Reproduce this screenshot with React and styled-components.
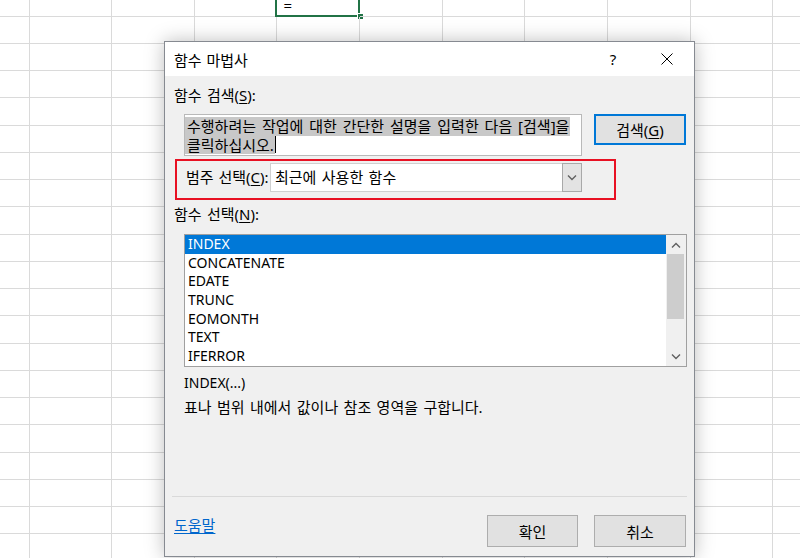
import React from "react";
import styled, { createGlobalStyle } from "styled-components";

const GlobalStyle = createGlobalStyle`
  html, body {
    margin: 0;
    padding: 0;
    background: #fff;
  }
  body {
    font-family: "Noto Sans", "Noto Sans CJK KR", sans-serif;
    font-size: 15px;
    color: #000;
    overflow: hidden;
  }
`;

const COLS = 11;
const ROWS = 21;

const Page = styled.div`
  position: relative;
  width: 800px;
  height: 558px;
  overflow: hidden;
  background: #fff;
`;

const Sheet = styled.div`
  display: grid;
  grid-template-columns: 29.5px repeat(${COLS - 1}, 82.65px);
  grid-template-rows: 16.5px repeat(${ROWS - 1}, 27.26px);
`;

const Cell = styled.div`
  box-sizing: border-box;
  border-right: 1px solid #dadada;
  border-bottom: 1px solid #dadada;
  position: relative;
  font-size: 15px;
  display: flex;
  align-items: flex-start;
  padding: 0 0 0 6px;
  line-height: 11px;

  ${(p) =>
    p.$active &&
    `
    &::before {
      content: "";
      position: absolute;
      left: -2px;
      right: -1px;
      top: -3px;
      bottom: -1px;
      border: 2px solid #217346;
    }
    &::after {
      content: "";
      position: absolute;
      right: -4px;
      bottom: -3px;
      width: 5px;
      height: 5px;
      background: #217346;
      border: 1px solid #fff;
      border-right: none;
      border-bottom: none;
    }
  `}
`;

const Dialog = styled.div`
  position: absolute;
  left: 164px;
  top: 41px;
  width: 531px;
  height: 516px;
  box-sizing: border-box;
  border: 1px solid #868a91;
  background: #f0f0f0;
  box-shadow: 0 0 18px rgba(0, 0, 0, 0.26);
  display: flex;
  flex-direction: column;
`;

const TitleBar = styled.div`
  height: 34px;
  background: #fff;
  display: flex;
  align-items: center;
  padding-left: 9px;
`;

const Title = styled.div`
  flex: 1;
  word-spacing: 1px;
`;

const TitleButton = styled.div`
  width: 54px;
  height: 34px;
  display: flex;
  align-items: center;
  justify-content: center;
`;

const Body = styled.div`
  flex: 1;
  display: flex;
  flex-direction: column;
  padding-left: 9px;
`;

const Label = styled.div`
  height: 20px;
  line-height: 20px;
  margin-top: ${(p) => p.$top || 0}px;
  margin-left: ${(p) => p.$indent || 0}px;
  font-size: ${(p) => (p.$latin ? 14 : 15)}px;
  white-space: nowrap;
  word-spacing: 1.5px;
`;

const U = styled.span`
  text-decoration: underline;
  text-underline-offset: 2px;
`;

const SearchRow = styled.div`
  display: flex;
  align-items: flex-start;
  margin-top: 9px;
  padding-left: 10px;
`;

const SearchBox = styled.div`
  box-sizing: border-box;
  width: 398px;
  height: 42px;
  background: #fff;
  border: 1px solid #b9b9b9;
  padding: 2px 0 0 0;
  white-space: nowrap;
`;

const SelLine = styled.div`
  display: flex;
  align-items: center;
  height: 18.5px;
`;

const Sel = styled.span`
  display: inline-block;
  background: #c8c8c8;
  line-height: 18.5px;
  height: 18.5px;
  padding: 0 1px 0 2px;
  word-spacing: 2px;
`;

const Caret = styled.span`
  display: inline-block;
  width: 1px;
  height: 17px;
  background: #000;
`;

const Button = styled.button`
  box-sizing: border-box;
  width: ${(p) => p.$w || 91}px;
  height: ${(p) => p.$h || 32}px;
  background: #e1e1e1;
  border: ${(p) => (p.$default ? "2px solid #0078d7" : "1px solid #adadad")};
  font-family: inherit;
  font-size: 15px;
  color: #000;
  padding: 0;
  margin: 0;
  margin-left: ${(p) => p.$gap || 0}px;
`;

const CategoryFrame = styled.div`
  box-sizing: border-box;
  margin-top: 3px;
  margin-left: 1px;
  width: 441px;
  height: 41px;
  border: 2px solid #e81123;
  display: flex;
  align-items: flex-start;
  padding: 2px 0 0 9px;
`;

const CategoryLabel = styled.div`
  width: 84px;
  height: 29px;
  line-height: 29px;
  white-space: nowrap;
  word-spacing: 1px;
`;

const SelectBox = styled.div`
  box-sizing: border-box;
  width: 312px;
  height: 29px;
  background: #fff;
  border: 1px solid #d0d0d0;
  border-right: none;
  display: flex;
  align-items: stretch;
`;

const SelectValue = styled.div`
  flex: 1;
  padding-left: 4px;
  line-height: 27px;
  word-spacing: 1.5px;
`;

const DropButton = styled.div`
  box-sizing: border-box;
  width: 20px;
  margin-top: -1px;
  margin-bottom: -1px;
  background: #e3e3e3;
  border: 1px solid #a9a9a9;
  display: flex;
  align-items: center;
  justify-content: center;
`;

const ListBox = styled.div`
  box-sizing: border-box;
  margin-top: 10px;
  margin-left: 10px;
  width: 503px;
  height: 133px;
  background: #fff;
  border: 1px solid #a0a0a0;
  display: flex;
  font-size: 14px;
`;

const Items = styled.div`
  flex: 1;
`;

const Item = styled.div`
  height: 18.67px;
  line-height: 18.67px;
  padding-left: 3px;
  background: ${(p) => (p.$selected ? "#0078d7" : "transparent")};
  color: ${(p) => (p.$selected ? "#fff" : "#000")};
`;

const Scrollbar = styled.div`
  width: 20px;
  background: #f0f0f0;
  display: flex;
  flex-direction: column;
`;

const ScrollArrow = styled.div`
  height: 19px;
  display: flex;
  align-items: center;
  justify-content: center;
`;

const Track = styled.div`
  flex: 1;
`;

const Thumb = styled.div`
  margin: 0 2px 0 1px;
  height: 65px;
  background: #cdcdcd;
`;

const Footer = styled.div`
  margin-top: auto;
  display: flex;
  flex-direction: column;
`;

const Separator = styled.div`
  height: 1px;
  background: #d9d9d9;
  margin: 0 7px 0 -2px;
`;

const FooterRow = styled.div`
  display: flex;
  align-items: flex-start;
  margin-top: 18px;
  padding: 0 8px 9px 0;
`;

const HelpLink = styled.a`
  flex: 1;
  color: #0066cc;
  text-decoration: underline;
  text-underline-offset: 2px;
  line-height: 20px;
  cursor: pointer;
`;

const Chevron = ({ up }) => (
  <svg width="10" height="6" viewBox="0 0 10 6">
    <polyline
      points={up ? "1,5.5 5,1.5 9,5.5" : "1,0.5 5,4.5 9,0.5"}
      fill="none"
      stroke="#606060"
      strokeWidth="1.4"
    />
  </svg>
);

const functions = ["INDEX", "CONCATENATE", "EDATE", "TRUNC", "EOMONTH", "TEXT", "IFERROR"];

export default function App() {
  const cells = [];
  for (let r = 0; r < ROWS; r++) {
    for (let c = 0; c < COLS; c++) {
      const active = r === 0 && c === 4;
      cells.push(
        <Cell key={`${r}-${c}`} $active={active}>
          {active ? "=" : null}
        </Cell>
      );
    }
  }

  return (
    <Page>
      <GlobalStyle />
      <Sheet>{cells}</Sheet>

      <Dialog>
        <TitleBar>
          <Title>함수 마법사</Title>
          <TitleButton>?</TitleButton>
          <TitleButton>
            <svg width="12" height="12" viewBox="0 0 12 12">
              <path d="M0.5 0.5 L11.5 11.5 M11.5 0.5 L0.5 11.5" stroke="#000" strokeWidth="1" />
            </svg>
          </TitleButton>
        </TitleBar>

        <Body>
          <Label $top={9}>
            함수 검색(<U>S</U>):
          </Label>

          <SearchRow>
            <SearchBox>
              <SelLine>
                <Sel>수행하려는 작업에 대한 간단한 설명을 입력한 다음 [검색]을</Sel>
              </SelLine>
              <SelLine>
                <Sel>클릭하십시오.</Sel>
                <Caret />
              </SelLine>
            </SearchBox>
            <Button $default $w={92} $h={31} $gap={12}>
              검색(<U>G</U>)
            </Button>
          </SearchRow>

          <CategoryFrame>
            <CategoryLabel>
              범주 선택(<U>C</U>):
            </CategoryLabel>
            <SelectBox>
              <SelectValue>최근에 사용한 함수</SelectValue>
              <DropButton>
                <Chevron />
              </DropButton>
            </SelectBox>
          </CategoryFrame>

          <Label $top={4}>
            함수 선택(<U>N</U>):
          </Label>

          <ListBox>
            <Items>
              {functions.map((f, i) => (
                <Item key={f} $selected={i === 0}>
                  {f}
                </Item>
              ))}
            </Items>
            <Scrollbar>
              <ScrollArrow>
                <Chevron up />
              </ScrollArrow>
              <Track>
                <Thumb />
              </Track>
              <ScrollArrow>
                <Chevron />
              </ScrollArrow>
            </Scrollbar>
          </ListBox>

          <Label $top={6} $indent={10} $latin>
            INDEX(...)
          </Label>
          <Label $top={4} $indent={10}>
            표나 범위 내에서 값이나 참조 영역을 구합니다.
          </Label>

          <Footer>
            <Separator />
            <FooterRow>
              <HelpLink>도움말</HelpLink>
              <Button>확인</Button>
              <Button $gap={16} $w={92}>
                취소
              </Button>
            </FooterRow>
          </Footer>
        </Body>
      </Dialog>
    </Page>
  );
}
